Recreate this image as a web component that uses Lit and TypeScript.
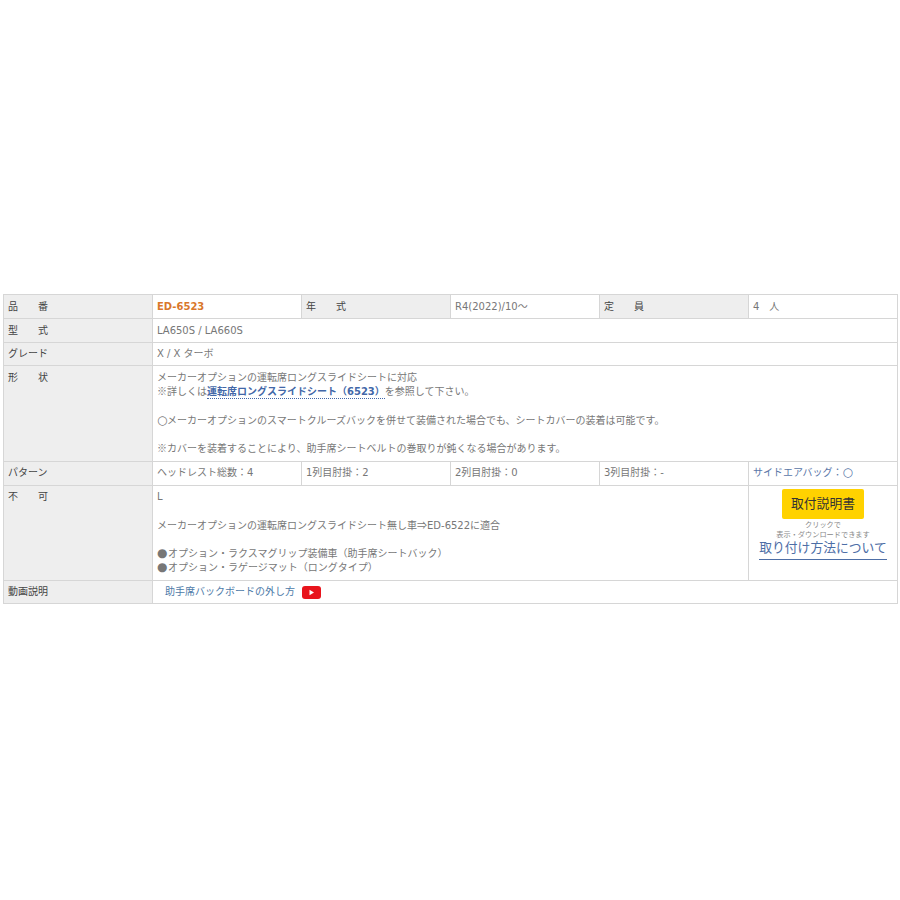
import { LitElement, html, css } from "lit";
import { customElement } from "lit/decorators.js";

@customElement("app-root")
export class AppRoot extends LitElement {
  static styles = css`
    :host { display: block; height: 900px; background: #fff; font-family: "DejaVu Sans", "Noto Sans CJK JP", sans-serif; }
    .wrap { padding: 294px 0 0 3px; }
    table { width: 895px; table-layout: fixed; border-collapse: collapse; font-size: 10px; line-height: 14.3px; color: #777; }
    col { width: 149px; }
    td, th { box-sizing: border-box; border: 1px solid #d6d6d6; padding: 4px 4px 0 4px; vertical-align: top; text-align: left; font-weight: 400; }
    th { background: #eeeeee; color: #444; }
    .h24 > * { height: 24px; padding-top: 5px; }
    .h24b > * { height: 24px; }
    .h23 > * { height: 23px; }
    .h96 > * { height: 96px; padding-top: 5px; }
    .h95 > * { height: 95px; }
    .spaced { display: flex; gap: 20px; }
    .code { color: #d9772b; font-weight: 700; }
    .lnk { color: #4267a8; font-weight: 700; border-bottom: 1px dotted #4267a8; padding-bottom: 1px; }
    .blue { color: #5a76a8; }
    .cjk { font-family: "Noto Sans CJK JP", sans-serif; line-height: 0; }
    .mark { display: inline-block; width: 10px; font-size: 12px; line-height: 0; }
    .bullet { display: inline-block; width: 11px; font-size: 12px; line-height: 0; }
    .h95 > td.center { text-align: center; padding-top: 3px; }
    .btn { display: inline-block; width: 82px; height: 30px; line-height: 30px; background: #ffd200; border-radius: 2px; color: #333; font-size: 12.8px; text-align: center; }
    .small { font-size: 7.2px; line-height: 10px; color: #888; margin-top: 1px; }
    .how { display: inline-block; color: #4d6ea6; font-size: 12.8px; line-height: 16px; border-bottom: 1px solid #4d6ea6; padding-bottom: 3px; }
    td.video { padding-left: 12px; color: #4d7aa8; }
    .video span { vertical-align: middle; }
    .yt { display: inline-block; vertical-align: middle; margin-left: 7px; }
  `;
  private sp(a: string, b: string) {
    return html`<div class="spaced"><span>${a}</span><span>${b}</span></div>`;
  }
  render() {
    return html`<div class="wrap"><table>
      <colgroup><col /><col /><col /><col /><col /><col /></colgroup>
      <tbody>
      <tr class="h24"><th>${this.sp("品", "番")}</th><td><span class="code">ED-6523</span></td><th>${this.sp("年", "式")}</th><td>R4(2022)/10～</td><th>${this.sp("定", "員")}</th><td>4　人</td></tr>
      <tr class="h24"><th>${this.sp("型", "式")}</th><td colspan="5">LA650S / LA660S</td></tr>
      <tr class="h23"><th>グレード</th><td colspan="5">X / X ターボ</td></tr>
      <tr class="h96"><th>${this.sp("形", "状")}</th><td colspan="5">メーカーオプションの運転席ロングスライドシートに対応<br /><span class="cjk">※</span>詳しくは<span class="lnk">運転席ロングスライドシート（6523）</span>を参照して下さい。<br /><br /><span class="mark">○</span>メーカーオプションのスマートクルーズバックを併せて装備された場合でも、シートカバーの装着は可能です。<br /><br /><span class="cjk">※</span>カバーを装着することにより、助手席シートベルトの巻取りが鈍くなる場合があります。</td></tr>
      <tr class="h24b"><th>パターン</th><td>ヘッドレスト総数：4</td><td>1列目肘掛：2</td><td>2列目肘掛：0</td><td>3列目肘掛：-</td><td class="blue">サイドエアバッグ：<span class="mark">○</span></td></tr>
      <tr class="h95"><th>${this.sp("不", "可")}</th><td colspan="4">L<br /><br />メーカーオプションの運転席ロングスライドシート無し車<span class="cjk">⇒</span>ED-6522に適合<br /><br /><span class="bullet">●</span>オプション・ラクスマグリップ装備車（助手席シートバック）<br /><span class="bullet">●</span>オプション・ラゲージマット（ロングタイプ）</td>
        <td class="center"><span class="btn">取付説明書</span><div class="small">クリックで<br />表示・ダウンロードできます</div><span class="how">取り付け方法について</span></td></tr>
      <tr class="h23"><th>動画説明</th><td colspan="5" class="video"><span>助手席バックボードの外し方</span><svg class="yt" width="19" height="13" viewBox="0 0 19 13"><rect width="19" height="13" rx="3" fill="#e8141c"/><path d="M7.5 3.8 L12 6.5 L7.5 9.2 Z" fill="#fff"/></svg></td></tr>
      </tbody>
    </table></div>`;
  }
}
